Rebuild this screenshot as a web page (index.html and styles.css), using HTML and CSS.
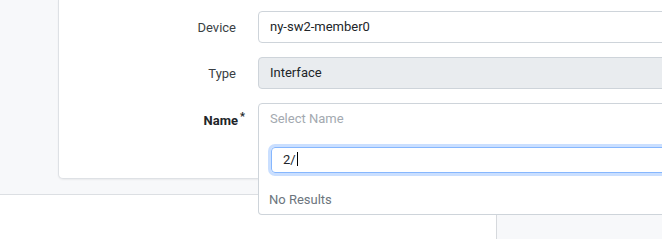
FILE: index.html
```html
<!DOCTYPE html>
<html lang="en">
<head>
    <meta charset="UTF-8">
    <title>Assign interface</title>
    <link rel="stylesheet" href="styles.css">
</head>
<body>
<div class="main">
    <div class="card">
        <div class="row">
            <label class="label">Device</label>
            <div class="control">ny-sw2-member0</div>
        </div>
        <div class="row">
            <label class="label">Type</label>
            <div class="control disabled">Interface</div>
        </div>
        <div class="row">
            <label class="label required">Name<span class="req">*</span></label>
            <div class="select">
                <div class="control open placeholder">Select Name</div>
                <div class="menu">
                    <div class="search">2/<span class="caret"></span></div>
                    <div class="empty">No Results</div>
                </div>
            </div>
        </div>
    </div>
</div>
<div class="footer">
    <div class="footer-left"></div>
    <div class="footer-right"></div>
</div>
</body>
</html>
```

FILE: styles.css
```css
html, body {
    margin: 0;
    height: 100%;
    overflow: hidden;
}
body {
    display: flex;
    flex-direction: column;
    background-color: #ffffff;
    font-family: Roboto, "Noto Sans", sans-serif;
    font-size: 13px;
    color: #212529;
}
.main {
    background-color: #f7f8fa;
    padding: 0 0 15px 58px;
    border-bottom: 1px solid #dcdfe3;
    position: relative;
    z-index: 2;
}
.card {
    width: 800px;
    background-color: #ffffff;
    border: 1px solid #dee1e5;
    border-top: none;
    border-radius: 0 0 5px 5px;
    box-shadow: 0 1px 2px rgba(0, 0, 0, 0.06);
    padding: 11px 0 43px 0;
    display: flex;
    flex-direction: column;
    gap: 14px;
}
.row {
    display: grid;
    grid-template-columns: 186px 1fr;
    column-gap: 13px;
    align-items: center;
}
.label {
    text-align: right;
    padding-right: 9px;
    color: #3a3f44;
}
.label.required {
    padding-right: 0;
    font-weight: 700;
    color: #212529;
}
.req {
    font-size: 11px;
    vertical-align: 5px;
    margin-left: 2px;
}
.control {
    height: 30px;
    line-height: 30px;
    border: 1px solid #ced4da;
    border-radius: 4px;
    padding: 0 11px;
    background-color: #ffffff;
}
.control.disabled {
    background-color: #e9ecef;
}
.control.placeholder {
    color: #a3a9b0;
}
.select {
    position: relative;
}
.control.open {
    border-radius: 4px 4px 0 0;
}
.menu {
    position: absolute;
    top: 31px;
    left: 0;
    right: 0;
    background-color: #ffffff;
    border: 1px solid #ced4da;
    border-top: none;
    border-radius: 0 0 4px 4px;
    padding: 13px 0 4px 12px;
    z-index: 5;
}
.search {
    height: 24px;
    line-height: 24px;
    border: 1px solid #86b7fe;
    border-radius: 4px;
    box-shadow: 0 0 0 3px rgba(13, 110, 253, 0.22);
    padding: 0 11px;
    color: #212529;
}
.caret {
    display: inline-block;
    width: 1px;
    height: 14px;
    background-color: #000000;
    vertical-align: -2px;
    margin-left: 1px;
}
.empty {
    margin-top: 17px;
    margin-left: -2px;
    line-height: 20px;
    color: #6c757d;
}
.footer {
    display: flex;
    flex: 1;
}
.footer-left {
    width: 496px;
    background-color: #ffffff;
}
.footer-right {
    flex: 1;
    background-color: #f7f8fa;
    border-left: 1px solid #d6d9dd;
}
```
